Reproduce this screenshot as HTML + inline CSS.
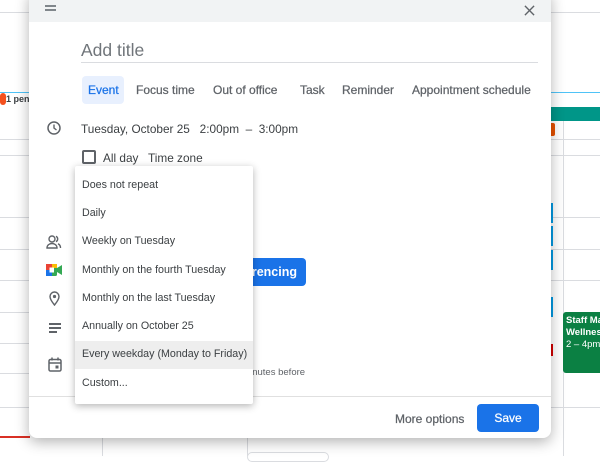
<!DOCTYPE html>
<html><head><style>
*{margin:0;padding:0;box-sizing:border-box}
body{width:600px;height:456px;overflow:hidden;position:relative;background:#fff;font-family:"Liberation Sans",Arial,sans-serif;color:#3c4043}
.a{position:absolute}
.hl{position:absolute;height:1px;background:#dadce0}
.t{position:absolute;font-size:12px;white-space:nowrap}
.tab{position:absolute;font-size:12px;color:#5f6368;white-space:nowrap;top:83px;-webkit-text-stroke:0.25px #5f6368}
.dd{position:absolute;left:7px;font-size:10.7px;white-space:nowrap}
</style></head><body>
<div class="hl" style="left:0;top:12px;width:600px"></div>
<div class="hl" style="left:0;top:139px;width:30px"></div>
<div class="hl" style="left:0;top:155px;width:30px"></div>
<div class="hl" style="left:0;top:217px;width:30px"></div>
<div class="hl" style="left:0;top:249px;width:30px"></div>
<div class="hl" style="left:0;top:280px;width:30px"></div>
<div class="hl" style="left:0;top:312px;width:30px"></div>
<div class="hl" style="left:0;top:343px;width:30px"></div>
<div class="hl" style="left:0;top:373px;width:30px"></div>
<div class="hl" style="left:0;top:407px;width:30px"></div>
<div class="hl" style="left:551px;top:139px;width:49px"></div>
<div class="hl" style="left:551px;top:155px;width:49px"></div>
<div class="hl" style="left:551px;top:217px;width:49px"></div>
<div class="hl" style="left:551px;top:249px;width:49px"></div>
<div class="hl" style="left:551px;top:280px;width:49px"></div>
<div class="hl" style="left:551px;top:407px;width:49px"></div>
<div class="a" style="left:563px;top:107px;width:1px;height:349px;background:#dadce0"></div>
<div class="a" style="left:102px;top:438px;width:1px;height:18px;background:#dadce0"></div>
<div class="a" style="left:247px;top:438px;width:1px;height:18px;background:#dadce0"></div>
<div class="a" style="left:0;top:436px;width:30px;height:2px;background:#d93025"></div>
<div class="a" style="left:0;top:92px;width:600px;height:1px;background:#4fc3f7"></div>
<div class="a" style="left:0;top:93px;width:6px;height:12px;border-radius:6px;background:#f4511e"></div>
<div class="t" style="left:6px;top:94px;font-size:9px;font-weight:bold;color:#3c4043">1 pen</div>
<div class="a" style="left:551px;top:107px;width:49px;height:14px;background:#009688"></div>
<div class="a" style="left:548px;top:123px;width:7px;height:13px;border-radius:2px;background:#e65100"></div>
<div class="a" style="left:548px;top:203px;width:5px;height:20px;background:#039be5"></div>
<div class="a" style="left:548px;top:226px;width:5px;height:20px;background:#039be5"></div>
<div class="a" style="left:548px;top:250px;width:5px;height:20px;background:#039be5"></div>
<div class="a" style="left:548px;top:297px;width:5px;height:20px;background:#039be5"></div>
<div class="a" style="left:548px;top:344px;width:5px;height:12px;background:#d50000"></div>
<div class="a" style="left:563px;top:312px;width:40px;height:61px;background:#0b8043;border-radius:3px;color:#fff;font-size:9.5px;font-weight:bold;padding:3px 3px;line-height:12px;overflow:hidden;white-space:nowrap">Staff Ma<br>Wellnes<br><span style="font-weight:normal">2 – 4pm</span></div>
<div class="a" style="left:247px;top:452px;width:82px;height:10px;border:1px solid #dadce0;border-radius:5px"></div>

<div class="a" style="left:29px;top:-10px;width:522px;height:448px;background:#fff;border-radius:8px;box-shadow:0 4px 14px rgba(0,0,0,.3);overflow:hidden">
 <div class="a" style="left:0;top:0;width:522px;height:32px;background:#f1f3f4"></div>
 <div class="a" style="left:16px;top:15px;width:11px;height:1.5px;background:#80868b"></div>
 <div class="a" style="left:16px;top:19px;width:11px;height:1.5px;background:#80868b"></div>
 <svg class="a" style="left:495px;top:15px" width="11" height="11" viewBox="0 0 12 12"><path d="M1 1L11 11M11 1L1 11" stroke="#5f6368" stroke-width="1.5"/></svg>
 <div class="t" style="left:52px;top:50px;font-size:17.5px;color:#70757a">Add title</div>
 <div class="a" style="left:52px;top:72px;width:457px;height:1px;background:#dadce0"></div>
 <div class="a" style="left:53px;top:86px;width:42px;height:28px;background:#e8f0fe;border-radius:4px"></div>
 <div class="tab" style="left:59px;top:93px;color:#1a73e8;-webkit-text-stroke:0.25px #1a73e8">Event</div>
 <div class="tab" style="left:107px;top:93px">Focus time</div>
 <div class="tab" style="left:184px;top:93px">Out of office</div>
 <div class="tab" style="left:271px;top:93px">Task</div>
 <div class="tab" style="left:313px;top:93px">Reminder</div>
 <div class="tab" style="left:383px;top:93px">Appointment schedule</div>
 <svg class="a" style="left:18px;top:131px" width="14" height="14" viewBox="0 0 14 14"><circle cx="7" cy="7" r="6" fill="none" stroke="#5f6368" stroke-width="1.5"/><path d="M7 3.5V7l2.5 2" fill="none" stroke="#5f6368" stroke-width="1.4"/></svg>
 <div class="t" style="left:52px;top:132px;font-size:11.8px">Tuesday, October 25&nbsp;&nbsp;&nbsp;2:00pm &nbsp;–&nbsp; 3:00pm</div>
 <div class="a" style="left:53px;top:160px;width:14px;height:14px;border:2px solid #5f6368;border-radius:2px"></div>
 <div class="t" style="left:74px;top:161px;font-size:11.8px">All day</div>
 <div class="t" style="left:119px;top:161px;font-size:11.8px">Time zone</div>
 <svg class="a" style="left:17px;top:245px" width="16" height="14" viewBox="0 0 16 14"><circle cx="6" cy="4" r="3" fill="none" stroke="#5f6368" stroke-width="1.4"/><path d="M1 13c0-3 2.5-4.5 5-4.5s5 1.5 5 4.5z" fill="none" stroke="#5f6368" stroke-width="1.4"/><path d="M10 1.3a3 3 0 010 5.4M12 8.8c1.5.6 2.5 2 2.5 4.2" fill="none" stroke="#5f6368" stroke-width="1.4"/></svg>
 <svg class="a" style="left:17px;top:274px" width="16" height="12" viewBox="0 0 16 12"><rect x="0" y="0" width="11" height="12" rx="1.5" fill="#34a853"/><rect x="0" y="0" width="6" height="6" fill="#ea4335"/><rect x="0" y="6" width="6" height="6" fill="#1a73e8"/><rect x="6" y="0" width="5" height="4" fill="#fbbc04"/><rect x="3.5" y="3.5" width="4.5" height="5" fill="#fff"/><path d="M11 4l5-3v10l-5-3z" fill="#34a853"/></svg>
 <svg class="a" style="left:20px;top:301px" width="11" height="15" viewBox="0 0 11 15"><path d="M5.5 14S1 8.5 1 5.5a4.5 4.5 0 019 0C10 8.5 5.5 14 5.5 14z" fill="none" stroke="#5f6368" stroke-width="1.4"/><circle cx="5.5" cy="5.5" r="1.6" fill="#5f6368"/></svg>
 <div class="a" style="left:20px;top:333px;width:12px;height:1.5px;background:#5f6368"></div>
 <div class="a" style="left:20px;top:337px;width:12px;height:1.5px;background:#5f6368"></div>
 <div class="a" style="left:20px;top:341px;width:8px;height:1.5px;background:#5f6368"></div>
 <svg class="a" style="left:19px;top:367px" width="14" height="15" viewBox="0 0 14 15"><rect x="1" y="2.5" width="12" height="11.5" rx="1.5" fill="none" stroke="#5f6368" stroke-width="1.5"/><path d="M1 6h12M4 0.5v3M10 0.5v3" stroke="#5f6368" stroke-width="1.5"/><rect x="7.5" y="8.5" width="3" height="3" fill="#5f6368"/></svg>
 <div class="a" style="left:150px;top:268px;width:127px;height:28px;background:#1a73e8;border-radius:4px"></div>
 <div class="t" style="left:150px;top:275px;width:118px;text-align:right;color:#fff;font-weight:bold;font-size:12.5px">conferencing</div>
 <div class="t" style="left:200px;top:377px;font-size:9.5px;color:#5f6368">30 minutes before</div>
 <div class="a" style="left:0;top:406px;width:522px;height:1px;background:#e0e0e0"></div>
 <div class="t" style="left:366px;top:422px;color:#5f6368;font-size:12px;-webkit-text-stroke:0.25px #5f6368">More options</div>
 <div class="a" style="left:448px;top:414px;width:62px;height:28px;background:#1a73e8;border-radius:4px;color:#fff;font-size:12px;text-align:center;line-height:28px;-webkit-text-stroke:0.25px #fff">Save</div>
</div>

<div class="a" style="left:75px;top:166px;width:178px;height:238px;background:#fff;border-radius:2px;box-shadow:0 2px 8px rgba(0,0,0,.3)">
 <div class="a" style="left:0;top:175px;width:178px;height:28px;background:#eeeeee"></div>
 <div class="dd" style="top:13px">Does not repeat</div>
 <div class="dd" style="top:41px">Daily</div>
 <div class="dd" style="top:69px">Weekly on Tuesday</div>
 <div class="dd" style="top:98px">Monthly on the fourth Tuesday</div>
 <div class="dd" style="top:126px">Monthly on the last Tuesday</div>
 <div class="dd" style="top:154px">Annually on October 25</div>
 <div class="dd" style="top:182px">Every weekday (Monday to Friday)</div>
 <div class="dd" style="top:211px">Custom...</div>
</div>
</body></html>
